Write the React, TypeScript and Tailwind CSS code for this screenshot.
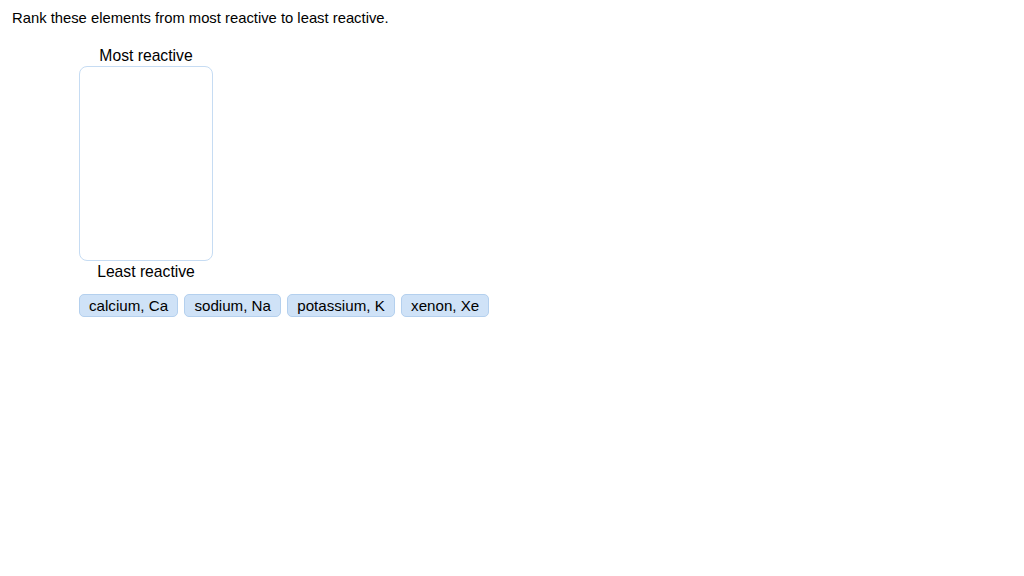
const items = ['calcium, Ca', 'sodium, Na', 'potassium, K', 'xenon, Xe'];

export default function App() {
  return (
    <div className="min-h-screen bg-white text-black font-['Liberation_Sans',Arial,sans-serif]">
      <div className="px-3 pt-[9px]">
        <p className="text-[14.8px] leading-[18px]">Rank these elements from most reactive to least reactive.</p>
        <div className="ml-[67px] mt-[20px] w-[134px] flex flex-col items-center">
          <div className="text-[15.7px] leading-[18px]">Most reactive</div>
          <div className="mt-[1px] w-[134px] h-[195px] rounded-[8px] border border-[#c6dcf3] bg-white" />
          <div className="mt-[1px] text-[15.7px] leading-[20px]">Least reactive</div>
        </div>
        <div className="ml-[67px] mt-[12px] flex gap-[6.3px]">
          {items.map((item) => (
            <div
              key={item}
              className="h-[23px] px-[9px] flex items-center rounded-[5px] border border-[#b4d0ee] bg-[#cfe2f7] text-[15.15px] leading-none"
            >
              {item}
            </div>
          ))}
        </div>
      </div>
    </div>
  );
}
